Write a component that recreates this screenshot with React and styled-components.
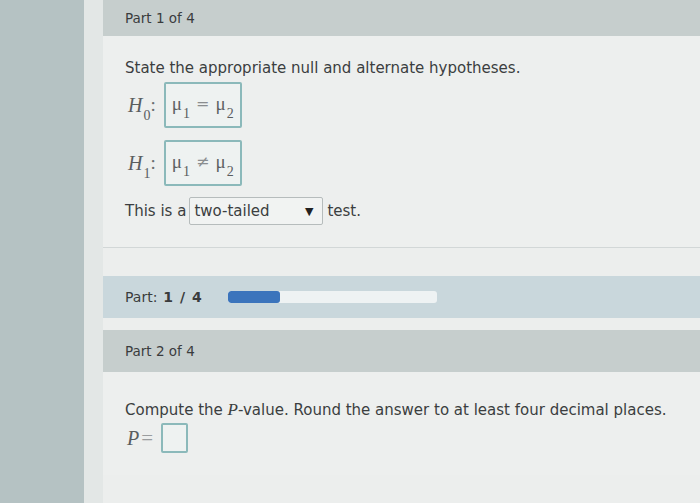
import React from "react";
import styled, { createGlobalStyle } from "styled-components";

const GlobalStyle = createGlobalStyle`
  html, body {
    margin: 0;
    padding: 0;
    background: #eceeed;
  }
  body {
    font-family: "DejaVu Sans", Verdana, sans-serif;
    color: #3b3e40;
  }
`;

const Page = styled.div`
  display: flex;
  height: 503px;
  overflow: hidden;
`;

const SideStrip = styled.div`
  width: 84px;
  flex-shrink: 0;
  background: #b5c2c3;
`;

const Gutter = styled.div`
  width: 19px;
  flex-shrink: 0;
  background: #e3e7e6;
`;

const Main = styled.div`
  flex: 1;
  display: flex;
  flex-direction: column;
  background: #eceeed;
`;

const SectionHeader = styled.div`
  height: ${(p) => p.height}px;
  flex-shrink: 0;
  display: flex;
  align-items: center;
  padding-left: 22px;
  background: #c6cecd;
  font-size: 13.5px;
  color: #3a3c3d;
`;

const Panel = styled.div`
  padding: ${(p) => p.top}px 22px 22px 22px;
  background: #edefee;
  border-bottom: ${(p) => (p.bordered ? "1px solid #d2d7d7" : "none")};
`;

const Question = styled.div`
  font-size: 15px;
  line-height: 18px;
  color: #3b3e40;
`;

const MathRow = styled.div`
  display: flex;
  align-items: center;
  margin-top: ${(p) => p.gap}px;
  padding-left: 3px;
`;

const Var = styled.span`
  font-family: "Liberation Serif", "Times New Roman", serif;
  font-style: italic;
  font-size: 20px;
  color: #5a5d5f;
`;

const Sub = styled.sub`
  font-family: "Liberation Serif", "Times New Roman", serif;
  font-style: normal;
  font-size: 14px;
  vertical-align: -8px;
  line-height: 0;
  margin-left: 1px;
  color: #5a5d5f;
`;

const Colon = styled.span`
  font-family: "Liberation Serif", "Times New Roman", serif;
  font-size: 19px;
  color: #6a6d6f;
  margin: 0 8px 0 0;
`;

const AnswerBox = styled.div`
  display: inline-flex;
  align-items: center;
  justify-content: center;
  gap: 6px;
  width: ${(p) => p.w}px;
  height: ${(p) => p.h}px;
  box-sizing: border-box;
  padding-bottom: 3px;
  border: 2px solid #8bb9ba;
  border-radius: 2px;
  background: #eef2f1;
`;

const Mu = styled.span`
  font-family: "Liberation Serif", "Times New Roman", serif;
  font-size: 19px;
  color: #5e6163;
`;

const Op = styled.span`
  font-family: "DejaVu Serif", serif;
  font-size: 16px;
  color: #8a8d8f;
`;

const SelectLine = styled.div`
  display: flex;
  align-items: center;
  margin-top: 11px;
  font-size: 15px;
  color: #3b3e40;
`;

const Select = styled.div`
  display: flex;
  align-items: center;
  justify-content: space-between;
  box-sizing: border-box;
  width: 134px;
  height: 28px;
  margin: 0 4px 0 3px;
  padding: 0 9px 0 4px;
  border: 1px solid #b6bcbc;
  border-radius: 2px;
  background: #f1f3f2;
  color: #3b3e40;
`;

const Arrow = styled.span`
  font-size: 11px;
  color: #222;
`;

const Spacer = styled.div`
  height: ${(p) => p.h}px;
  flex-shrink: 0;
  background: #eceeed;
`;

const PartBar = styled.div`
  height: 42px;
  flex-shrink: 0;
  display: flex;
  align-items: center;
  padding-left: 22px;
  background: #c9d7dc;
  font-size: 14px;
  color: #3a3c3d;
`;

const Bold = styled.b`
  font-weight: bold;
  margin-left: 6px;
  word-spacing: 2px;
`;

const Track = styled.div`
  width: 209px;
  height: 12px;
  margin-left: 26px;
  border-radius: 3px;
  background: #eef2f3;
  overflow: hidden;
`;

const Fill = styled.div`
  height: 100%;
  border-radius: 3px;
  background: #3b74bc;
`;

const PRow = styled.div`
  display: flex;
  align-items: center;
  margin-top: 4px;
  padding-left: 2px;
`;

const Eq = styled.span`
  font-family: "Liberation Serif", "Times New Roman", serif;
  font-size: 21px;
  color: #9a9d9f;
  margin: 0 8px 0 2px;
`;

const InlineVar = styled.i`
  font-family: "Liberation Serif", "Times New Roman", serif;
  font-size: 17px;
`;

export default function App() {
  const part = 1;
  const total = 4;
  return (
    <>
      <GlobalStyle />
      <Page>
        <SideStrip />
        <Gutter />
        <Main>
          <SectionHeader height={36}>Part 1 of 4</SectionHeader>
          <Panel top={23} bordered>
            <Question>State the appropriate null and alternate hypotheses.</Question>
            <MathRow gap={5}>
              <Var>
                H<Sub>0</Sub>
              </Var>
              <Colon>:</Colon>
              <AnswerBox w={78} h={46}>
                <Mu>
                  μ<Sub>1</Sub>
                </Mu>
                <Op>=</Op>
                <Mu>
                  μ<Sub>2</Sub>
                </Mu>
              </AnswerBox>
            </MathRow>
            <MathRow gap={12}>
              <Var>
                H<Sub>1</Sub>
              </Var>
              <Colon>:</Colon>
              <AnswerBox w={78} h={46}>
                <Mu>
                  μ<Sub>1</Sub>
                </Mu>
                <Op>≠</Op>
                <Mu>
                  μ<Sub>2</Sub>
                </Mu>
              </AnswerBox>
            </MathRow>
            <SelectLine>
              This is a
              <Select>
                <span>two-tailed</span>
                <Arrow>▼</Arrow>
              </Select>
              test.
            </SelectLine>
          </Panel>
          <Spacer h={28} />
          <PartBar>
            Part:<Bold>
              {part} / {total}
            </Bold>
            <Track>
              <Fill style={{ width: `${(part / total) * 100}%` }} />
            </Track>
          </PartBar>
          <Spacer h={12} />
          <SectionHeader height={42}>Part 2 of 4</SectionHeader>
          <Panel top={29}>
            <Question>
              Compute the <InlineVar>P</InlineVar>-value. Round the answer to at least four decimal places.
            </Question>
            <PRow>
              <Var>P</Var>
              <Eq>=</Eq>
              <AnswerBox w={27} h={30} />
            </PRow>
          </Panel>
        </Main>
      </Page>
    </>
  );
}
